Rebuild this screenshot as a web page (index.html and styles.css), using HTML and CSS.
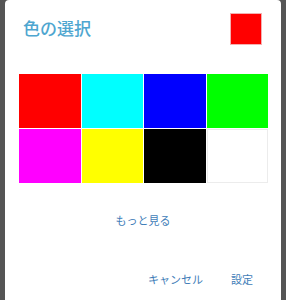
FILE: index.html
```html
<!DOCTYPE html>
<html lang="ja">
<head>
<meta charset="utf-8">
<link rel="stylesheet" href="styles.css">
</head>
<body>
<div class="dialog">
  <div class="header">
    <div class="title">色の選択</div>
    <div class="current"></div>
  </div>
  <div class="grid">
    <div class="cell red"></div>
    <div class="cell cyan"></div>
    <div class="cell blue"></div>
    <div class="cell green"></div>
    <div class="cell magenta"></div>
    <div class="cell yellow"></div>
    <div class="cell black"></div>
    <div class="cell white"></div>
  </div>
  <div class="more">もっと見る</div>
  <div class="actions">
    <span class="btn">キャンセル</span>
    <span class="btn">設定</span>
  </div>
</div>
</body>
</html>
```
FILE: styles.css
```css
html, body {
  margin: 0;
  padding: 0;
  background: #555555;
}
body {
  padding: 0 5px;
  font-family: "Noto Sans CJK JP", "Noto Sans", sans-serif;
}
.dialog {
  width: 276px;
  height: 300px;
  background: #ffffff;
  border-radius: 4px 4px 0 0;
  box-sizing: border-box;
  padding-top: 13px;
}
.header {
  display: flex;
  justify-content: space-between;
  align-items: center;
  padding: 0 19px 0 18px;
}
.title {
  font-size: 17px;
  font-weight: 500;
  color: #4ea6d0;
  line-height: 24px;
  margin-top: -2px;
}
.current {
  width: 32px;
  height: 32px;
  background: #ff0000;
  box-sizing: border-box;
  border: 1px solid #f3b0b0;
}
.grid {
  margin: 29px 13px 0 14px;
  display: grid;
  grid-template-columns: repeat(4, 1fr);
  grid-template-rows: 54px 54px;
  gap: 1px;
}
.cell.red { background: #ff0000; }
.cell.cyan { background: #00ffff; }
.cell.blue { background: #0000ff; }
.cell.green { background: #00ff00; }
.cell.magenta { background: #ff00ff; }
.cell.yellow { background: #ffff00; }
.cell.black { background: #000000; }
.cell.white { background: #ffffff; border: 1px solid #ececec; }
.more {
  text-align: center;
  font-size: 11px;
  line-height: 16px;
  color: #3f7db8;
  margin-top: 29px;
}
.actions {
  display: flex;
  justify-content: flex-end;
  gap: 28px;
  padding-right: 28px;
  margin-top: 43px;
}
.btn {
  font-size: 11px;
  line-height: 16px;
  color: #3f7db8;
}
```
